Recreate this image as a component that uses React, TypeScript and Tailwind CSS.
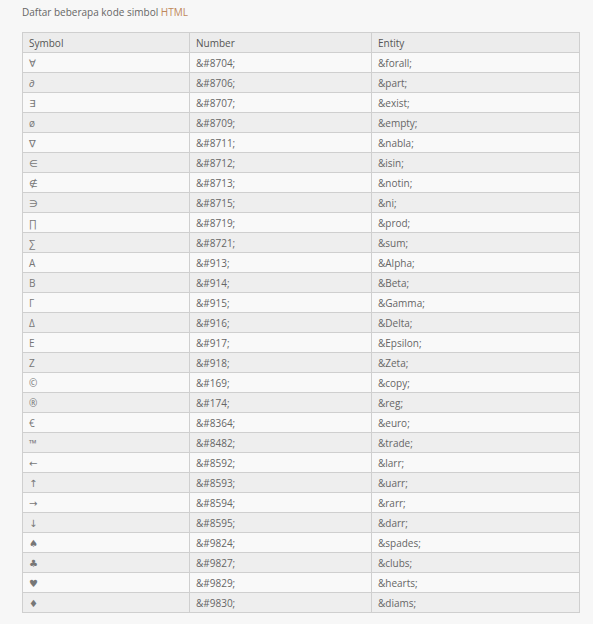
import React from "react";

const rows: [string, string, string][] = [
  ["∀", "&#8704;", "&forall;"],
  ["∂", "&#8706;", "&part;"],
  ["∃", "&#8707;", "&exist;"],
  ["ø", "&#8709;", "&empty;"],
  ["∇", "&#8711;", "&nabla;"],
  ["∈", "&#8712;", "&isin;"],
  ["∉", "&#8713;", "&notin;"],
  ["∋", "&#8715;", "&ni;"],
  ["∏", "&#8719;", "&prod;"],
  ["∑", "&#8721;", "&sum;"],
  ["Α", "&#913;", "&Alpha;"],
  ["Β", "&#914;", "&Beta;"],
  ["Γ", "&#915;", "&Gamma;"],
  ["Δ", "&#916;", "&Delta;"],
  ["Ε", "&#917;", "&Epsilon;"],
  ["Ζ", "&#918;", "&Zeta;"],
  ["©", "&#169;", "&copy;"],
  ["®", "&#174;", "&reg;"],
  ["€", "&#8364;", "&euro;"],
  ["™", "&#8482;", "&trade;"],
  ["←", "&#8592;", "&larr;"],
  ["↑", "&#8593;", "&uarr;"],
  ["→", "&#8594;", "&rarr;"],
  ["↓", "&#8595;", "&darr;"],
  ["♠", "&#9824;", "&spades;"],
  ["♣", "&#9827;", "&clubs;"],
  ["♥", "&#9829;", "&hearts;"],
  ["♦", "&#9830;", "&diams;"],
];

export default function App() {
  return (
    <div
      className="min-h-[624px] w-[593px] bg-[#f7f7f7] text-[#666] text-[10px]"
      style={{ fontFamily: '"Open Sans", "DejaVu Sans", sans-serif' }}
    >
      <div className="pl-[22px] pt-[4px]">
        <p className="h-[16px] leading-[16px]">
          Daftar beberapa kode simbol <span className="text-[#c0875a]">HTML</span>
        </p>
        <table className="mt-[12px] border-collapse w-[557px] table-fixed">
          <colgroup>
            <col className="w-[167px]" />
            <col className="w-[182px]" />
            <col className="w-[208px]" />
          </colgroup>
          <thead>
            <tr className="bg-[#ececec] h-[20px]">
              <th className="border border-[#cfcfcf] text-left font-normal pl-[6px] leading-[18px] text-[#555]">Symbol</th>
              <th className="border border-[#cfcfcf] text-left font-normal pl-[6px] leading-[18px] text-[#555]">Number</th>
              <th className="border border-[#cfcfcf] text-left font-normal pl-[6px] leading-[18px] text-[#555]">Entity</th>
            </tr>
          </thead>
          <tbody>
            {rows.map((r, i) => (
              <tr key={i} className={`h-[20px] ${i % 2 === 0 ? "bg-[#f9f9f9]" : "bg-[#eeeeee]"}`}>
                <td className="border border-[#cfcfcf] pl-[6px] leading-[18px] text-[#777]">{r[0]}</td>
                <td className="border border-[#cfcfcf] pl-[6px] leading-[18px]">{r[1]}</td>
                <td className="border border-[#cfcfcf] pl-[6px] leading-[18px]">{r[2]}</td>
              </tr>
            ))}
          </tbody>
        </table>
      </div>
    </div>
  );
}
